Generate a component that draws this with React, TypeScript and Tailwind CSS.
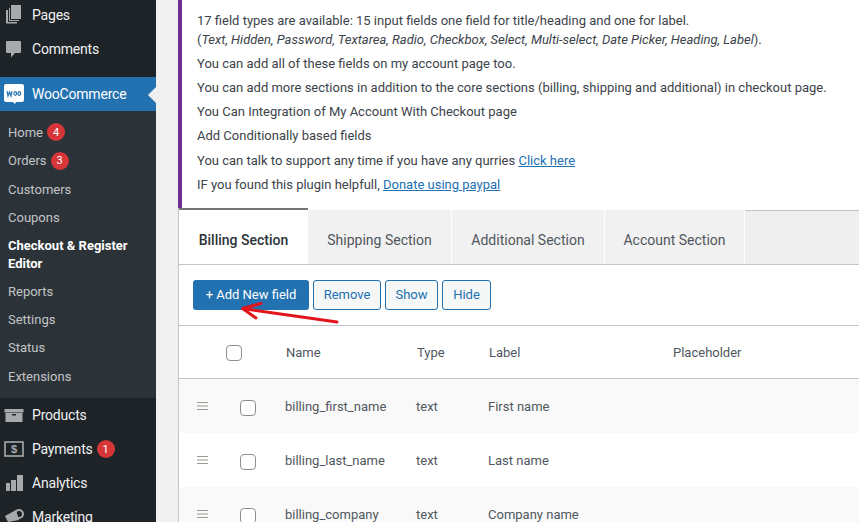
const topItems = [
  { label: "Pages", icon: <PagesIcon /> },
  { label: "Comments", icon: <CommentIcon /> },
];

const subItems = ["Customers", "Coupons"];
const subItems2 = ["Reports", "Settings", "Status", "Extensions"];

const rows = [
  { name: "billing_first_name", label: "First name", bg: "bg-[#f9f9f9]" },
  { name: "billing_last_name", label: "Last name", bg: "bg-white" },
  { name: "billing_company", label: "Company name", bg: "bg-[#f9f9f9]" },
];

function PagesIcon() {
  return (
    <svg width="20" height="20" viewBox="0 0 20 20" fill="#a7aaad">
      <path d="M7 0h10v14H7z" />
      <path d="M5 3h1v12h9v1H5z" />
      <path d="M2 5h2v12h9v1.500H2z" />
    </svg>
  );
}

function CommentIcon() {
  return (
    <svg width="20" height="20" viewBox="0 0 20 20" fill="#a7aaad">
      <path d="M3 2h13a1 1 0 0 1 1 1v10a1 1 0 0 1-1 1h-5l-4 4.500V14H3a1 1 0 0 1-1-1V3a1 1 0 0 1 1-1z" />
    </svg>
  );
}

function WooIcon() {
  return (
    <svg width="20" height="21" viewBox="0 0 20 21">
      <path d="M2 0h16a2 2 0 0 1 2 2v14a2 2 0 0 1-2 2h-6l-1 2-2-2H2a2 2 0 0 1-2-2V2a2 2 0 0 1 2-2z" fill="#fff" />
      <path d="M3 7l1 5 1.500-4 1.500 4 1-5M10 9.500a1.300 1.800 0 1 0 2.600 0a1.300 1.800 0 1 0-2.600 0M14 9.500a1.300 1.800 0 1 0 2.600 0a1.300 1.800 0 1 0-2.600 0" fill="none" stroke="#2271b1" strokeWidth="1.200" />
    </svg>
  );
}

function ProductsIcon() {
  return (
    <svg width="20" height="20" viewBox="0 0 20 20" fill="#a7aaad">
      <path d="M0.500 4h19v3.500H0.500z" />
      <path fillRule="evenodd" d="M1.500 8h17v9h-17zM8 9v1.500h4V9z" />
    </svg>
  );
}

function PaymentsIcon() {
  return (
    <svg width="20" height="16" viewBox="0 0 20 16">
      <rect x="1" y="1" width="18" height="14" fill="none" stroke="#a7aaad" strokeWidth="1.600" />
      <text x="10" y="12" textAnchor="middle" fontSize="11" fontWeight="700" fill="#a7aaad" fontFamily="'Liberation Sans', sans-serif">$</text>
    </svg>
  );
}

function AnalyticsIcon() {
  return (
    <svg width="20" height="20" viewBox="0 0 20 20" fill="#a7aaad">
      <path d="M2 10h4v8H2zM7 7h5v11H7zM13 2h6v16h-6z" />
    </svg>
  );
}

function MarketingIcon() {
  return (
    <svg width="20" height="20" viewBox="0 0 20 20" fill="#a7aaad">
      <path d="M1 9l11-6 3 10-11 2z" />
      <circle cx="15" cy="7" r="4" fill="none" stroke="#a7aaad" strokeWidth="2" />
    </svg>
  );
}

function DragIcon() {
  return (
    <svg className="block" width="11" height="8" viewBox="0 0 11 8" fill="#9a9a8e">
      <path d="M0 0h11v1H0zM0 3.500h11v1H0zM0 7h11v1H0z" />
    </svg>
  );
}

function Badge({ n }: { n: number }) {
  return (
    <span className="ml-[4px] inline-flex h-[18px] w-[18px] items-center justify-center rounded-full bg-[#d63638] text-[11px] leading-none tracking-normal text-white">
      {n}
    </span>
  );
}

function MenuRow({ label, icon, badge }: { label: string; icon: React.ReactNode; badge?: number }) {
  return (
    <div className="flex h-[34px] items-center text-[14px] tracking-[-0.2px] text-[#f0f0f1]">
      <div className="flex w-[32px] justify-start pl-[4px]">{icon}</div>
      <span className="pt-[1px]">{label}</span>
      {badge ? <Badge n={badge} /> : null}
    </div>
  );
}

function SubRow({ label, badge }: { label: string; badge?: number }) {
  return (
    <div className="flex h-[28.4px] items-center pl-[8px] text-[13px] text-[#c3c4c7]">
      <span className="pt-[1px]">{label}</span>
      {badge ? <Badge n={badge} /> : null}
    </div>
  );
}

function Sidebar() {
  return (
    <aside className="h-[522px] w-[156px] shrink-0 overflow-hidden bg-[#1d2327]">
      <div className="-mt-[2px]">
        {topItems.map((item) => (
          <MenuRow key={item.label} label={item.label} icon={item.icon} />
        ))}
      </div>
      <div className="h-[11px]" />
      <div className="relative flex h-[34px] items-center bg-[#2271b1] text-[14px] tracking-[-0.2px] text-white">
        <div className="flex w-[32px] pl-[4px] pt-[1px]">
          <WooIcon />
        </div>
        <span className="pt-[1px]">WooCommerce</span>
        <span className="absolute right-0 top-[10px] h-0 w-0 border-y-[8px] border-r-[8px] border-y-transparent border-r-[#f0f0f1]" />
      </div>
      <div className="bg-[#2c3338] pb-[8px] pt-[7px]">
        <SubRow label="Home" badge={4} />
        <SubRow label="Orders" badge={3} />
        {subItems.map((s) => (
          <SubRow key={s} label={s} />
        ))}
        <div className="pb-[4px] pl-[8px] pt-[5px] text-[13px] font-bold leading-[18px] text-white">
          Checkout &amp; Register Editor
        </div>
        {subItems2.map((s) => (
          <SubRow key={s} label={s} />
        ))}
      </div>
      <MenuRow label="Products" icon={<ProductsIcon />} />
      <MenuRow label="Payments" icon={<PaymentsIcon />} badge={1} />
      <MenuRow label="Analytics" icon={<AnalyticsIcon />} />
      <MenuRow label="Marketing" icon={<MarketingIcon />} />
    </aside>
  );
}

function Notice() {
  return (
    <div className="h-[208px] border-l-4 border-[#6b2f91] bg-white pl-[15px] pt-[11px] text-[13px] text-[#3c434a]">
      <p className="leading-[19px]">
        17 field types are available: 15 input fields one field for title/heading and one for label.
      </p>
      <p className="leading-[19px]">
        (<em>Text, Hidden, Password, Textarea, Radio, Checkbox, Select, Multi-select, Date Picker, Heading, Label</em>).
      </p>
      <p className="mt-[5px] leading-[19px]">You can add all of these fields on my account page too.</p>
      <p className="mt-[5px] leading-[19px]">
        You can add more sections in addition to the core sections (billing, shipping and additional) in checkout page.
      </p>
      <p className="mt-[5px] leading-[19px]">You Can Integration of My Account With Checkout page</p>
      <p className="mt-[5px] leading-[19px]">Add Conditionally based fields</p>
      <p className="mt-[6px] leading-[19px]">
        You can talk to support any time if you have any qurries <a className="text-[#2271b1] underline">Click here</a>
      </p>
      <p className="mt-[5px] leading-[19px]">
        IF you found this plugin helpfull, <a className="text-[#2271b1] underline">Donate using paypal</a>
      </p>
    </div>
  );
}

function Tabs() {
  const tab = "mt-[2px] flex items-center justify-center bg-[#f1f1f1] pt-[6px]";
  return (
    <div className="flex h-[57px] border-b border-[#c3c4c7] bg-white text-[14px] text-[#50575e]">
      <div className="flex w-[129px] items-center justify-center border-t-2 border-[#757575] bg-white pt-[6px] font-medium text-[#2c3338]">
        Billing Section
      </div>
      <div className={`${tab} w-[143px]`}>Shipping Section</div>
      <div className={`${tab} ml-[1px] w-[152px]`}>Additional Section</div>
      <div className={`${tab} ml-[1px] w-[139px]`}>Account Section</div>
      <div className="ml-[1px] mt-[2px] flex-1 border-t border-[#c3c4c7] bg-[#efefef]" />
    </div>
  );
}

function Toolbar() {
  const btn = "flex h-[30px] items-center justify-center rounded-[3px] border border-[#2271b1] bg-[#f6f7f7] text-[13px] text-[#2271b1]";
  return (
    <div className="relative flex h-[61px] items-center gap-[4px] border-b border-[#c3c4c7] bg-white pb-[1px] pl-[14px]">
      <div className="flex h-[30px] w-[116px] items-center justify-center rounded-[3px] bg-[#2271b1] text-[13px] text-white">
        + Add New field
      </div>
      <div className={`${btn} w-[68px]`}>Remove</div>
      <div className={`${btn} w-[53px]`}>Show</div>
      <div className={`${btn} w-[49px]`}>Hide</div>
      {/* annotation arrow over the button */}
      <svg className="absolute left-[60px] top-[35px]" width="105" height="30" viewBox="0 0 105 30">
        <path d="M3.500 8.500 L98 22 M3.500 8.500 L22 3.500 M3.500 8.500 L17 18" fill="none" stroke="#e2141c" strokeWidth="3" strokeLinecap="round" />
      </svg>
    </div>
  );
}

function Check({ className }: { className?: string }) {
  return <span className={`block h-[16px] w-[16px] rounded-[4px] border border-[#8c8f94] bg-white ${className ?? ""}`} />;
}

function FieldTable() {
  return (
    <div className="text-[#50575e]">
      <div className="flex h-[53px] items-center border-b border-[#c3c4c7] bg-white pt-[2px] text-[13px]">
        <div className="w-[107px] pl-[47px]">
          <Check />
        </div>
        <div className="w-[131px]">Name</div>
        <div className="w-[72px]">Type</div>
        <div className="w-[184px]">Label</div>
        <div>Placeholder</div>
      </div>
      {rows.map((r) => (
        <div key={r.name} className={`flex h-[54px] items-center pt-[2px] text-[13px] ${r.bg}`}>
          <div className="w-[61px] pb-[2px] pl-[18px]">
            <DragIcon />
          </div>
          <div className="w-[45px]">
            <Check className="translate-y-[1px]" />
          </div>
          <div className="w-[131px]">{r.name}</div>
          <div className="w-[72px]">text</div>
          <div>{r.label}</div>
        </div>
      ))}
    </div>
  );
}

export default function App() {
  return (
    <div className="flex h-[522px] w-[859px] overflow-hidden bg-[#f0f0f1] font-['Roboto',sans-serif]">
      <Sidebar />
      <main className="min-w-0 flex-1 pl-[22px]">
        <Notice />
        <div className="border-l border-[#c3c4c7]">
          <Tabs />
          <Toolbar />
          <FieldTable />
        </div>
      </main>
    </div>
  );
}
